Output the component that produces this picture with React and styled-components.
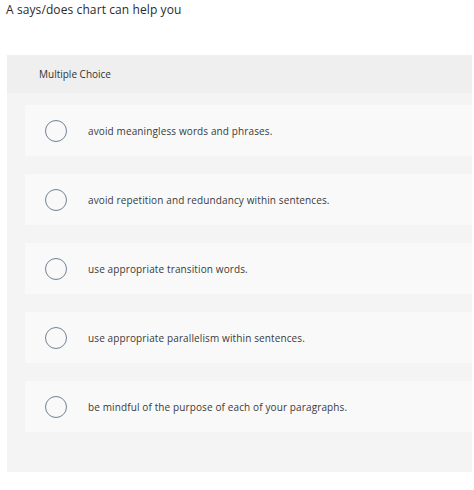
import React from 'react';
import styled, { createGlobalStyle } from 'styled-components';

const GlobalStyle = createGlobalStyle`
  body {
    margin: 0;
    background: #ffffff;
    font-family: "Open Sans", "Liberation Sans", sans-serif;
  }
`;

const options = [
  'avoid meaningless words and phrases.',
  'avoid repetition and redundancy within sentences.',
  'use appropriate transition words.',
  'use appropriate parallelism within sentences.',
  'be mindful of the purpose of each of your paragraphs.',
];

const App = () => {
  return (
    <Page>
      <GlobalStyle />
      <Question>A says/does chart can help you</Question>
      <Panel>
        <PanelHeader>Multiple Choice</PanelHeader>
        <OptionList>
          {options.map((text) => (
            <OptionCard key={text}>
              <Radio />
              <OptionText>{text}</OptionText>
            </OptionCard>
          ))}
        </OptionList>
      </Panel>
    </Page>
  );
};

const Page = styled.div`
  width: 474px;
  height: 490px;
  padding: 2px 0 0 6px;
  box-sizing: border-box;
`;

const Question = styled.div`
  font-size: 12px;
  letter-spacing: 0.1px;
  color: #2a2a2a;
  line-height: 16px;
  margin-bottom: 37px;
`;

const Panel = styled.div`
  margin-left: 1px;
  width: 465px;
  background: #f4f4f4;
  padding-bottom: 40px;
`;

const PanelHeader = styled.div`
  background: #efefef;
  height: 38px;
  box-sizing: border-box;
  padding-left: 32px;
  display: flex;
  align-items: center;
  font-size: 10px;
  color: #333;
`;

const OptionList = styled.div`
  display: flex;
  flex-direction: column;
  gap: 18px;
  padding: 12px 0 0 18px;
`;

const OptionCard = styled.div`
  height: 51px;
  background: #f9f9f9;
  display: flex;
  align-items: center;
  padding-left: 20px;
`;

const Radio = styled.span`
  width: 20px;
  height: 20px;
  border: 1.5px solid #6f8296;
  border-radius: 50%;
  flex-shrink: 0;
`;

const OptionText = styled.span`
  margin-left: 21px;
  font-size: 10px;
  letter-spacing: 0.12px;
  color: #3a3a3a;
`;

export default App;
